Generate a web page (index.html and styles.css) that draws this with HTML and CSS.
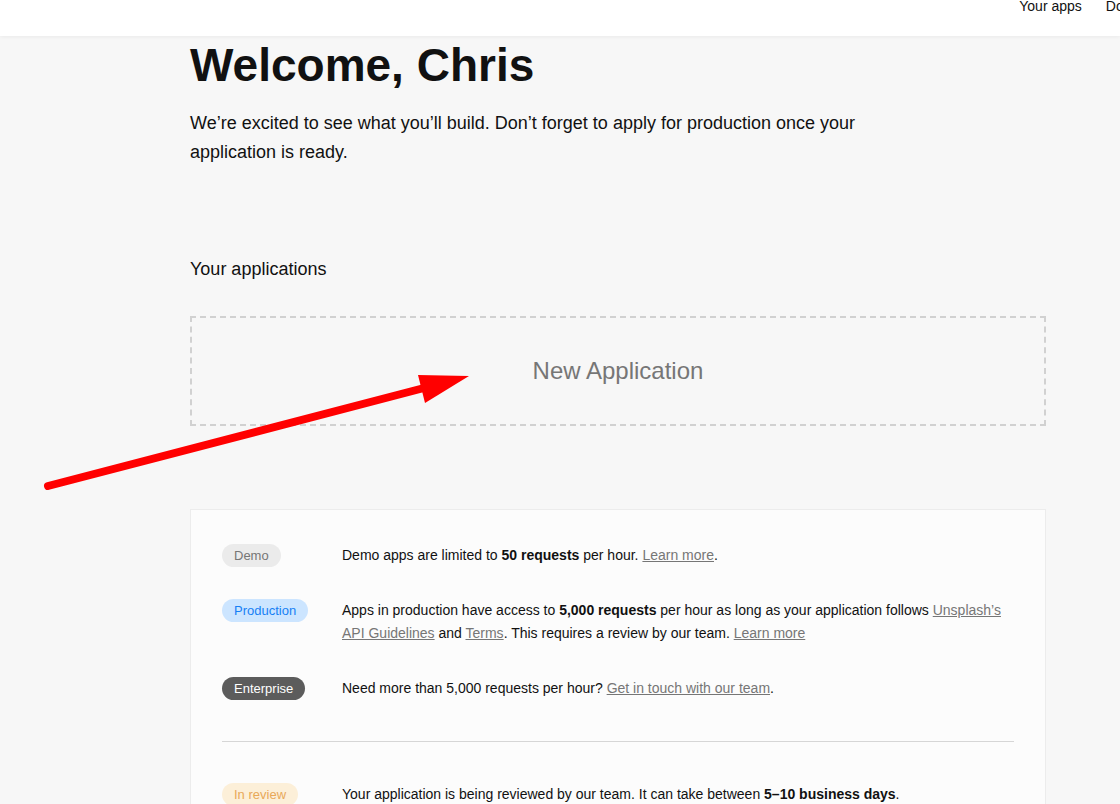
FILE: index.html
```html
<!DOCTYPE html>
<html lang="en">
<head>
    <meta charset="UTF-8">
    <meta name="viewport" content="width=device-width, initial-scale=1.0">
    <title>Your apps</title>
    <link rel="stylesheet" href="styles.css">
</head>
<body>
    <div class="header">
        <div class="nav">
            <a href="#">Your apps</a>
            <a href="#">Documentation</a>
        </div>
    </div>

    <div class="main">
        <h1>Welcome, Chris</h1>
        <p class="intro">We’re excited to see what you’ll build. Don’t forget to apply for production once your application is ready.</p>

        <h3 class="section-title">Your applications</h3>
        <a href="#" class="new-app">New Application</a>

        <div class="info-card">
            <div class="info-row">
                <div class="badge-col"><span class="badge demo">Demo</span></div>
                <div class="info-text">Demo apps are limited to <b>50 requests</b> per hour. <a href="#">Learn more</a>.</div>
            </div>
            <div class="info-row">
                <div class="badge-col"><span class="badge production">Production</span></div>
                <div class="info-text">Apps in production have access to <b>5,000 requests</b> per hour as long as your application follows <a href="#">Unsplash’s API Guidelines</a> and <a href="#">Terms</a>. This requires a review by our team. <a href="#">Learn more</a></div>
            </div>
            <div class="info-row">
                <div class="badge-col"><span class="badge enterprise">Enterprise</span></div>
                <div class="info-text">Need more than 5,000 requests per hour? <a href="#">Get in touch with our team</a>.</div>
            </div>
            <hr>
            <div class="info-row">
                <div class="badge-col"><span class="badge review">In review</span></div>
                <div class="info-text">Your application is being reviewed by our team. It can take between <b>5–10 business days</b>.</div>
            </div>
        </div>
    </div>

    <svg class="arrow" width="1120" height="804" viewBox="0 0 1120 804">
        <line x1="48" y1="486" x2="424" y2="388" stroke="#ff0000" stroke-width="8" stroke-linecap="round"/>
        <polygon points="469,376 418,375 425,403" fill="#ff0000"/>
    </svg>
</body>
</html>
```

FILE: styles.css
```css
body {
    font-family: "Liberation Sans", Arial, sans-serif;
    margin: 0;
    padding: 0;
    background-color: #f7f7f7;
    color: #111;
    overflow: hidden;
}
.header {
    background: #fff;
    height: 36px;
    box-shadow: 0 1px 4px rgba(0, 0, 0, 0.06);
    display: flex;
    justify-content: flex-end;
    overflow: hidden;
}
.nav {
    display: flex;
    gap: 24px;
    margin-right: -80px;
    line-height: 12px;
}
.nav a {
    color: #111;
    text-decoration: none;
    font-size: 14px;
}
.main {
    width: 856px;
    margin: 0 auto;
    padding-top: 2px;
    position: relative;
    left: 58px;
}
h1 {
    font-size: 46px;
    line-height: 55px;
    margin: 0;
    color: #111;
}
.intro {
    font-size: 18px;
    line-height: 29px;
    margin: 16px 0 0;
    max-width: 680px;
}
.section-title {
    font-size: 18px;
    font-weight: normal;
    line-height: 29px;
    margin: 88px 0 0;
}
.new-app {
    display: flex;
    align-items: center;
    justify-content: center;
    height: 106px;
    margin-top: 32px;
    border: 2px dashed #d1d1d1;
    color: #767676;
    font-size: 24px;
    text-decoration: none;
}
.info-card {
    margin-top: 83px;
    background: #fcfcfc;
    border: 1px solid #ececec;
    padding: 34px 31px;
    font-size: 14px;
    line-height: 23px;
}
.info-row {
    display: flex;
    margin-bottom: 32px;
}
.info-row:last-child {
    margin-bottom: 0;
}
.badge-col {
    flex: 0 0 120px;
}
.badge {
    display: inline-block;
    font-size: 13px;
    padding: 0 12px;
    border-radius: 12px;
    line-height: 23px;
}
.demo {
    background: #ebebeb;
    color: #767676;
}
.production {
    background: #cce5ff;
    color: #1780f5;
}
.enterprise {
    background: #5c5c5c;
    color: #fff;
}
.review {
    background: #fcefd8;
    color: #e8a858;
}
.info-text {
    flex: 1;
}
.info-text a {
    color: #767676;
    text-decoration: underline;
}
.info-card hr {
    border: none;
    border-top: 1px solid #d6d6d6;
    margin: 41px 0 41px;
}
.arrow {
    position: absolute;
    left: 0;
    top: 0;
    pointer-events: none;
}
```
